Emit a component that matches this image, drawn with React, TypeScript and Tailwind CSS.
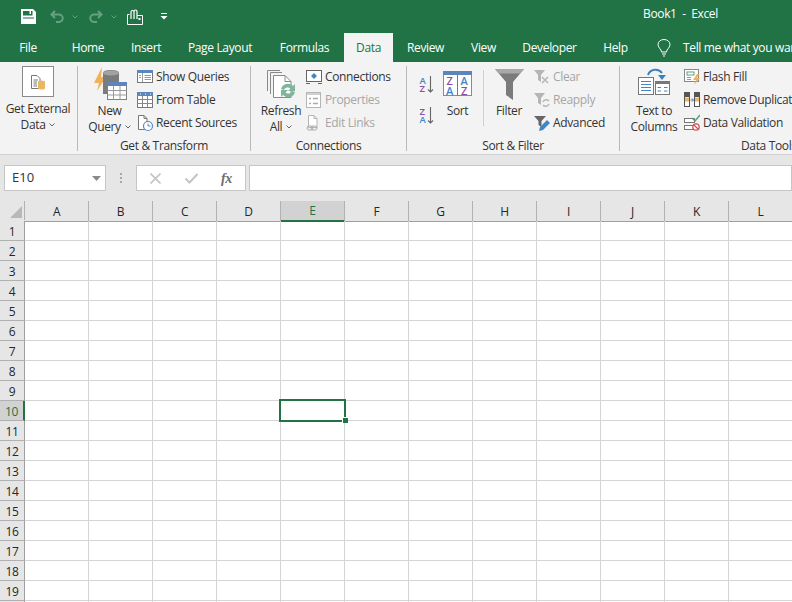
import type { ReactNode } from 'react'

const font = "font-['Open_Sans','Noto_Sans',sans-serif]"
const columns = ['A', 'B', 'C', 'D', 'E', 'F', 'G', 'H', 'I', 'J', 'K', 'L']
const rows = Array.from({ length: 20 }, (_, i) => i + 1)
const tabs = [
  { name: 'File', w: 'w-[56px]' },
  { name: 'Home', w: 'w-[64px]' },
  { name: 'Insert', w: 'w-[52px]' },
  { name: 'Page Layout', w: 'w-[96px]' },
  { name: 'Formulas', w: 'w-[76px] pr-[3px]' },
  { name: 'Data', w: 'w-[49px]', active: true },
  { name: 'Review', w: 'w-[65px]' },
  { name: 'View', w: 'w-[51px]' },
  { name: 'Developer', w: 'w-[81px]' },
  { name: 'Help', w: 'w-[51px]' },
]

function Chevron({ color = '#666' }: { color?: string }) {
  return (
    <svg width="6" height="4" viewBox="0 0 6 4" className="inline-block ml-[4px] mb-[1px]">
      <path d="M0.5 0.5 L3 3 L5.5 0.5" fill="none" stroke={color} strokeWidth="1" />
    </svg>
  )
}

function Small({ icon, label, disabled }: { icon: ReactNode; label: string; disabled?: boolean }) {
  return (
    <div className={`flex items-center h-[23px] whitespace-nowrap ${disabled ? 'text-[#a6a6a6]' : 'text-[#333]'}`}>
      <div className="w-[16px] h-[18px] mr-[3px] shrink-0">{icon}</div>
      {label}
    </div>
  )
}

function Large({ icon, lines, chevron, w, iconH = 'h-[38px]' }: { icon: ReactNode; lines: string[]; chevron?: boolean; w: string; iconH?: string }) {
  return (
    <div className={`flex flex-col items-center shrink-0 text-[#333] ${w}`}>
      <div className={`flex items-end justify-center ${iconH}`}>{icon}</div>
      {lines.map((l, i) => (
        <div key={l} className="h-[16px] leading-[16px] whitespace-nowrap">
          {l}
          {chevron && i === lines.length - 1 && <Chevron />}
        </div>
      ))}
    </div>
  )
}

function Group({ label, w, children, labelClass = 'justify-center' }: { label: string; w: string; children: ReactNode; labelClass?: string }) {
  return (
    <div className={`flex flex-col shrink-0 h-[92px] ${w}`}>
      <div className="flex h-[76px] pt-[3px]">{children}</div>
      <div className={`flex h-[16px] leading-[16px] text-[#333] whitespace-nowrap ${labelClass}`}>{label}</div>
    </div>
  )
}

function Sep() {
  return <div className="w-px h-[85px] mt-[4px] bg-[#b9b9b9] shrink-0" />
}

function Stack({ ml, w, children }: { ml: string; w: string; children: ReactNode }) {
  return <div className={`flex flex-col shrink-0 ${ml} ${w}`}>{children}</div>
}

const Blue = '#5a86bd'

const icons = {
  external: (
    <div className="w-[32px] h-[31px] mb-[4px] border border-[#8a8a8a] bg-white flex items-center justify-center">
      <svg width="16" height="16" viewBox="0 0 16 16">
        <path d="M1.5 1.5 H7 L10 4.5 V14.5 H1.5 Z" fill="#fff" stroke="#777" />
        <path d="M3.5 6 H8 M3.5 8 H7 M3.5 10 H7 M3.5 12 H7" stroke="#777" />
        <path d="M8 8 Q8 6.5 11.5 6.5 Q15 6.5 15 8 V14 Q15 15.5 11.5 15.5 Q8 15.5 8 14 Z" fill="#e9b566" />
      </svg>
    </div>
  ),
  newQuery: (
    <svg width="34" height="33" viewBox="0 0 34 33" className="mb-[3px]">
      <path d="M9 0 L1 16 H6 L4 24 L13 10 H8 Z" fill="#efb15a" />
      <path d="M10 6 Q10 3 18 3 Q26 3 26 6 V27 H10 Z" fill="#7b7b7b" />
      <ellipse cx="18" cy="6" rx="8" ry="2.6" fill="#a2a2a2" />
      <rect x="14.5" y="15.5" width="19" height="17" fill="#fff" stroke="#808080" />
      <rect x="14" y="15" width="20" height="4" fill={Blue} />
      <path d="M14.5 23.5 H33.5 M14.5 28 H33.5 M20.5 19 V32.5 M27 19 V32.5" stroke="#9a9a9a" />
    </svg>
  ),
  showQueries: (
    <svg width="16" height="18" viewBox="0 0 16 18">
      <rect x="0.5" y="2.5" width="15" height="12" fill="#fff" stroke="#777" />
      <rect x="0" y="2" width="16" height="3" fill={Blue} />
      <path d="M5.5 5 V14 M7.5 7.5 H14 M7.5 9.5 H14 M7.5 11.5 H14 M2 7.5 H4 M2 9.5 H4" stroke="#999" />
    </svg>
  ),
  fromTable: (
    <svg width="16" height="18" viewBox="0 0 16 18">
      <rect x="0.5" y="1.5" width="15" height="15" fill="#fff" stroke="#777" />
      <rect x="0" y="1" width="16" height="4" fill={Blue} />
      <path d="M0.5 8.5 H15.5 M0.5 12.5 H15.5 M5.5 5 V16 M10.5 5 V16" stroke="#888" />
      <path d="M3 3 H4 M8 3 H9 M13 3 H14" stroke="#fff" />
    </svg>
  ),
  recent: (
    <svg width="17" height="18" viewBox="0 0 17 18">
      <path d="M1.5 1.5 H7 L10 4.5 V15.5 H1.5 Z" fill="#fff" stroke="#777" />
      <path d="M7 1.5 V4.5 H10" fill="none" stroke="#777" />
      <circle cx="11" cy="12" r="4.5" fill="#fff" stroke={Blue} strokeWidth="1.2" />
      <path d="M11 9.5 V12 H13.5" fill="none" stroke={Blue} />
    </svg>
  ),
  refresh: (
    <svg width="30" height="32" viewBox="0 0 30 32" className="mb-[2px]">
      <path d="M1.5 1.5 H14 M1.5 1.5 V22" fill="none" stroke="#8a8a8a" />
      <path d="M4.5 3.5 H16 M4.5 3.5 V25" fill="none" stroke="#8a8a8a" />
      <path d="M7.5 6.5 H19 L25 12.5 V28.5 H7.5 Z" fill="#fff" stroke="#8a8a8a" />
      <path d="M19 6.5 V12.5 H25" fill="none" stroke="#8a8a8a" />
      <path d="M15 20 A7 7 0 0 1 27 17 L29 15 V22 H22 L24.5 19.5 A4 4 0 0 0 18 21 Z" fill="#7fb59a" />
      <path d="M29 23 A7 7 0 0 1 17 26 L15 28 V21 H22 L19.5 23.5 A4 4 0 0 0 26 22 Z" fill="#7fb59a" />
    </svg>
  ),
  connections: (
    <svg width="16" height="18" viewBox="0 0 16 18">
      <rect x="0.5" y="2.5" width="15" height="11" fill="#fff" stroke="#666" />
      <path d="M8 5 L11 8 L8 11 L5 8 Z" fill="#3f87c8" />
      <path d="M0 15.5 H4 M12 15.5 H16" stroke="#666" />
    </svg>
  ),
  properties: (
    <svg width="16" height="18" viewBox="0 0 16 18">
      <rect x="0.5" y="1.5" width="14" height="15" fill="#fff" stroke="#b5b5b5" />
      <rect x="1" y="2" width="13" height="2" fill="#d0d0d0" />
      <path d="M3 7.5 H5 M3 12.5 H5 M7 7.5 H12 M7 12.5 H12" stroke="#aaa" strokeWidth="1.3" />
    </svg>
  ),
  editLinks: (
    <svg width="16" height="18" viewBox="0 0 16 18">
      <path d="M2.5 1.5 H8 L11 4.5 V13.5 H2.5 Z" fill="#fff" stroke="#b5b5b5" />
      <path d="M8 1.5 V4.5 H11" fill="none" stroke="#b5b5b5" />
      <rect x="1" y="12" width="6" height="4" rx="2" fill="none" stroke="#aaa" />
      <rect x="5" y="12" width="6" height="4" rx="2" fill="none" stroke="#aaa" />
    </svg>
  ),
  sortAZ: (
    <svg width="16" height="20" viewBox="0 0 16 20">
      <text x="1.5" y="9.5" fontSize="9.5" fontWeight="600" fill="#3f87c8">A</text>
      <text x="1.5" y="18" fontSize="9.5" fontWeight="600" fill="#8b4ea6">Z</text>
      <path d="M12.5 2 V18 M10 15.5 L12.5 18 L15 15.5" fill="none" stroke="#666" strokeWidth="1.1" />
    </svg>
  ),
  sortZA: (
    <svg width="16" height="20" viewBox="0 0 16 20">
      <text x="1.5" y="9.5" fontSize="9.5" fontWeight="600" fill="#8b4ea6">Z</text>
      <text x="1.5" y="18" fontSize="9.5" fontWeight="600" fill="#3f87c8">A</text>
      <path d="M12.5 2 V18 M10 15.5 L12.5 18 L15 15.5" fill="none" stroke="#666" strokeWidth="1.1" />
    </svg>
  ),
  sort: (
    <svg width="29" height="25" viewBox="0 0 29 25" className="mb-[7px]">
      <rect x="0.5" y="0.5" width="28" height="24" fill="#fff" stroke="#8a8a8a" />
      <rect x="0" y="0" width="29" height="4" fill={Blue} />
      <path d="M14.5 4 V25" stroke="#777" />
      <text x="3.5" y="14" fontSize="11" fontWeight="600" fill="#8b4ea6">Z</text>
      <text x="3" y="23.5" fontSize="11" fontWeight="600" fill="#3f87c8">A</text>
      <text x="17.5" y="14" fontSize="11" fontWeight="600" fill="#3f87c8">A</text>
      <text x="18" y="23.5" fontSize="11" fontWeight="600" fill="#8b4ea6">Z</text>
    </svg>
  ),
  filter: (
    <svg width="29" height="31" viewBox="0 0 29 31" className="mb-[3px]">
      <path d="M0 0 H29 L18 13 V31 L11 26 V13 Z" fill="#7b7b7b" />
      <path d="M0 0 H29 L25 4.5 H4 Z" fill="#a8a8a8" />
    </svg>
  ),
  clear: (
    <svg width="16" height="18" viewBox="0 0 16 18">
      <path d="M0 2 H11 L7 7 V14 L4 12 V7 Z" fill="#b5b5b5" />
      <path d="M8 9 L14 15 M14 9 L8 15" stroke="#b5b5b5" strokeWidth="1.5" />
    </svg>
  ),
  reapply: (
    <svg width="16" height="18" viewBox="0 0 16 18">
      <path d="M0 2 H11 L7 7 V14 L4 12 V7 Z" fill="#b5b5b5" />
      <path d="M9 11 A3.5 3.5 0 0 1 15 10 M15 13 A3.5 3.5 0 0 1 9 14" fill="none" stroke="#b5b5b5" strokeWidth="1.4" />
    </svg>
  ),
  advanced: (
    <svg width="16" height="18" viewBox="0 0 16 18">
      <path d="M0 2 H12 L7.5 7 V13 L4.5 11 V7 Z" fill="#666" />
      <path d="M5 17 L6 13 L13 6 L16 9 L9 16 Z" fill="#3f87c8" />
    </svg>
  ),
  textColumns: (
    <svg width="32" height="27" viewBox="0 0 32 27" className="mb-[8px]">
      <path d="M10 7 A8 8 0 0 1 24 5" fill="none" stroke="#3f7fc0" strokeWidth="2" />
      <path d="M20 7 H28 L24 12 Z" fill="#3f7fc0" />
      <rect x="0.5" y="9.5" width="15" height="17" fill="#fff" stroke="#777" />
      <path d="M3 13.5 H13 M3 16.5 H13 M3 19.5 H13 M3 22.5 H13" stroke="#3f87c8" />
      <rect x="17.5" y="13.5" width="14" height="13" fill="#fff" stroke="#777" />
      <rect x="17" y="13" width="15" height="3" fill="#777" />
      <path d="M19.5 19.5 H23 M26 19.5 H29.5 M19.5 23 H23 M26 23 H29.5" stroke="#3f87c8" />
    </svg>
  ),
  flashFill: (
    <svg width="16" height="18" viewBox="0 0 16 18">
      <rect x="0.5" y="1.5" width="14" height="12" fill="#fff" stroke="#888" />
      <rect x="3" y="4" width="7" height="3" fill="#fff" stroke="#5fa080" />
      <path d="M3 9.5 H7 M3 11.5 H7" stroke="#999" />
      <path d="M13 6 L9 12 H12 L10 17 L16 10 H13 L15 6 Z" fill="#efb15a" />
    </svg>
  ),
  removeDup: (
    <svg width="16" height="18" viewBox="0 0 16 18">
      <rect x="0.5" y="1.5" width="5" height="14" fill="#fff" stroke="#555" />
      <rect x="10.5" y="1.5" width="5" height="14" fill="#fff" stroke="#555" />
      <rect x="1" y="2" width="4" height="4" fill="#555" />
      <rect x="11" y="2" width="4" height="4" fill="#555" />
      <rect x="1" y="6.5" width="4" height="4" fill="#e9b566" />
      <rect x="11" y="6.5" width="4" height="4" fill="#e9b566" />
      <path d="M6.5 9 H9.5 M8 7.5 L9.5 9 L8 10.5" fill="none" stroke="#3f87c8" />
    </svg>
  ),
  validation: (
    <svg width="16" height="18" viewBox="0 0 16 18">
      <rect x="0.5" y="4.5" width="10" height="4" fill="#fff" stroke="#777" />
      <rect x="0.5" y="11.5" width="10" height="4" fill="#fff" stroke="#777" />
      <path d="M8 4 L11 7 L16 1" fill="none" stroke="#5fa080" strokeWidth="1.5" />
      <circle cx="12" cy="13" r="3.2" fill="#fff" stroke="#d05050" strokeWidth="1.3" />
      <path d="M10 11 L14 15" stroke="#d05050" strokeWidth="1.3" />
    </svg>
  ),
}

function TitleBar() {
  return (
    <div className="flex items-center h-[33px] bg-[#217346] text-white shrink-0">
      <svg width="15" height="15" viewBox="0 0 15 15" className="ml-[21px] shrink-0">
        <path d="M0 0 H12 L15 3 V15 H0 Z" fill="#fff" />
        <rect x="2" y="2" width="9.5" height="4.5" fill="#217346" />
        <rect x="2" y="8.5" width="11" height="1" fill="#217346" />
        <rect x="4" y="10.5" width="7" height="3" fill="#fff" />
        <rect x="8.5" y="2" width="1.5" height="3" fill="#fff" />
      </svg>
      <svg width="15" height="13" viewBox="0 0 15 13" className="ml-[14px] shrink-0">
        <path d="M5 1 L1.5 4.5 L5 8 M2 4.5 H9 A3.5 3.5 0 0 1 9 12 H6" fill="none" stroke="#63a182" strokeWidth="2" />
      </svg>
      <svg width="6" height="4" viewBox="0 0 6 4" className="ml-[7px] shrink-0">
        <path d="M0.5 0.5 L3 3 L5.5 0.5" fill="none" stroke="#63a182" />
      </svg>
      <svg width="15" height="13" viewBox="0 0 15 13" className="ml-[10px] shrink-0">
        <path d="M10 1 L13.5 4.5 L10 8 M13 4.5 H6 A3.5 3.5 0 0 0 6 12 H9" fill="none" stroke="#63a182" strokeWidth="2" />
      </svg>
      <svg width="6" height="4" viewBox="0 0 6 4" className="ml-[8px] shrink-0">
        <path d="M0.5 0.5 L3 3 L5.5 0.5" fill="none" stroke="#63a182" />
      </svg>
      <svg width="16" height="16" viewBox="0 0 16 16" className="ml-[10px] shrink-0">
        <path d="M2.5 5.5 H0.5 V15.5 H15.5 V6.5 H10" fill="none" stroke="#fff" />
        <path d="M4 10 V3 A1.5 1.5 0 0 1 7 3 V10 M7 9 V2.5 A1.5 1.5 0 0 1 10 2.5 V10" fill="none" stroke="#fff" strokeWidth="1.2" />
        <rect x="11.5" y="9" width="2" height="2" fill="#fff" />
      </svg>
      <svg width="8" height="7" viewBox="0 0 8 7" className="ml-[17px] shrink-0">
        <path d="M1 0.5 H7" stroke="#fff" />
        <path d="M0.5 3 H7.5 L4 6.5 Z" fill="#fff" />
      </svg>
      <div className="ml-[475px] whitespace-nowrap pb-[5px]">Book1&nbsp; -&nbsp; Excel</div>
    </div>
  )
}

function TabBar() {
  return (
    <div className="flex items-stretch h-[29px] bg-[#217346] text-white shrink-0 overflow-hidden">
      {tabs.map((t) => (
        <div
          key={t.name}
          className={`flex items-center justify-center shrink-0 ${t.w} ${t.active ? 'bg-[#f3f3f3] text-[#217346]' : ''}`}
        >
          {t.name}
        </div>
      ))}
      <svg width="14" height="18" viewBox="0 0 14 18" className="ml-[16px] mt-[6px] shrink-0">
        <path d="M4.5 13 C4.5 10 1 9 1 5.5 A6 5 0 0 1 13 5.5 C13 9 9.5 10 9.5 13 Z" fill="none" stroke="#fff" />
        <path d="M5 15 H9 M6 17 H8" stroke="#fff" />
      </svg>
      <div className="ml-[12px] flex items-center whitespace-nowrap">Tell me what you want to do</div>
    </div>
  )
}

function Ribbon() {
  return (
    <div className="flex h-[93px] bg-[#f3f3f3] border-b border-[#d2d2d2] shrink-0 overflow-hidden">
      <Group label="" w="w-[77px]">
        <Large w="w-[76px]" iconH="h-[36px]" icon={icons.external} lines={['Get External', 'Data']} chevron />
      </Group>
      <Sep />
      <Group label="Get & Transform" w="w-[172px]">
        <div className="w-[5px] shrink-0" />
        <Large w="w-[53px]" icon={icons.newQuery} lines={['New', 'Query']} chevron />
        <Stack ml="ml-[1px]" w="w-[110px]">
          <Small icon={icons.showQueries} label="Show Queries" />
          <Small icon={icons.fromTable} label="From Table" />
          <Small icon={icons.recent} label="Recent Sources" />
        </Stack>
      </Group>
      <Sep />
      <Group label="Connections" w="w-[155px]">
        <div className="w-[8px] shrink-0" />
        <Large w="w-[44px]" icon={icons.refresh} lines={['Refresh', 'All']} chevron />
        <Stack ml="ml-[3px]" w="w-[95px]">
          <Small icon={icons.connections} label="Connections" />
          <Small icon={icons.properties} label="Properties" disabled />
          <Small icon={icons.editLinks} label="Edit Links" disabled />
        </Stack>
      </Group>
      <Sep />
      <Group label="Sort & Filter" w="w-[212px]">
        <div className="flex flex-col w-[16px] ml-[11px] mt-[9px] gap-[11px] shrink-0">
          {icons.sortAZ}
          {icons.sortZA}
        </div>
        <div className="w-[8px] shrink-0" />
        <Large w="w-[31px]" icon={icons.sort} lines={['Sort']} />
        <div className="ml-[10px] mr-[8px] w-px h-[56px] mt-[5px] bg-[#d0d0d0] shrink-0" />
        <Large w="w-[34px]" icon={icons.filter} lines={['Filter']} />
        <Stack ml="ml-[8px]" w="w-[85px]">
          <Small icon={icons.clear} label="Clear" disabled />
          <Small icon={icons.reapply} label="Reapply" disabled />
          <Small icon={icons.advanced} label="Advanced" />
        </Stack>
      </Group>
      <Sep />
      <Group label="Data Tools" w="w-[260px]" labelClass="pl-[121px]">
        <Large w="w-[68px]" icon={icons.textColumns} lines={['Text to', 'Columns']} />
        <Stack ml="ml-[-4px]" w="w-[160px]">
          <Small icon={icons.flashFill} label="Flash Fill" />
          <Small icon={icons.removeDup} label="Remove Duplicates" />
          <Small icon={icons.validation} label="Data Validation" />
        </Stack>
      </Group>
    </div>
  )
}

function FormulaBar() {
  return (
    <div className="flex items-start h-[46px] pt-[10px] bg-[#e6e6e6] shrink-0">
      <div className="flex items-center justify-between ml-[4px] w-[102px] h-[26px] bg-white border border-[#c6c6c6] pl-[7px] pr-[4px] text-[#333] text-[13px] tracking-normal">
        E10
        <svg width="9" height="5" viewBox="0 0 9 5">
          <path d="M0 0 H9 L4.5 5 Z" fill="#8a8a8a" />
        </svg>
      </div>
      <div className="flex flex-col gap-[2px] w-[2px] ml-[14px] mr-[14px] mt-[8px]">
        <div className="h-[2px] bg-[#a8a8a8]" />
        <div className="h-[2px] bg-[#a8a8a8]" />
        <div className="h-[2px] bg-[#a8a8a8]" />
      </div>
      <div className="flex items-center w-[110px] h-[26px] bg-white border border-[#c6c6c6] shrink-0">
        <svg width="11" height="11" viewBox="0 0 11 11" className="ml-[13px]">
          <path d="M0.5 0.5 L10.5 10.5 M10.5 0.5 L0.5 10.5" stroke="#c4c4c4" strokeWidth="1.6" />
        </svg>
        <svg width="13" height="11" viewBox="0 0 13 11" className="ml-[24px]">
          <path d="M0.5 5.5 L4.5 9.5 L12.5 1" fill="none" stroke="#c4c4c4" strokeWidth="2" />
        </svg>
        <span className="ml-[23px] font-['Liberation_Serif',serif] italic font-bold text-[#6e6e6e] text-[14px]">fx</span>
      </div>
      <div className="ml-[3px] flex-1 h-[26px] bg-white border border-[#c6c6c6]" />
    </div>
  )
}

function Sheet() {
  return (
    <div className="flex flex-col flex-1 bg-white text-[#262626] overflow-hidden">
      <div className="flex h-[20px] shrink-0 bg-[#e6e6e6] border-b border-[#9f9f9f] box-content -mb-px">
        <div className="flex items-end justify-end w-[25px] h-[19px] shrink-0 border-r border-[#b1b1b1] pr-[2px] pb-[2px]">
          <svg width="12" height="12" viewBox="0 0 12 12">
            <path d="M12 0 V12 H0 Z" fill="#b8b8b8" />
          </svg>
        </div>
        {columns.map((c) => (
          <div
            key={c}
            className={`flex items-center justify-center w-[64px] shrink-0 border-r border-[#b1b1b1] ${
              c === 'E' ? 'bg-[#d2d2d2] text-[#217346] border-b-2 border-b-[#217346] h-[21px] pt-[1px]' : 'h-[20px] pt-[1px]'
            }`}
          >
            {c}
          </div>
        ))}
      </div>
      {rows.map((r) => (
        <div key={r} className="flex h-[20px] shrink-0">
          <div
            className={`flex items-center justify-center w-[25px] shrink-0 pt-[2px] border-r border-b border-b-[#b1b1b1] ${
              r === 10
                ? 'bg-[#d2d2d2] text-[#217346] border-r-2 border-r-[#217346]'
                : 'bg-[#e6e6e6] border-r-[#9f9f9f]'
            }`}
          >
            {r}
          </div>
          {columns.map((c) => (
            <div key={c} className="relative w-[64px] shrink-0 border-r border-b border-[#d4d4d4]">
              {r === 10 && c === 'E' && (
                <div className="absolute z-10 left-[-2px] top-[-2px] w-[67px] h-[23px] border-2 border-[#217346]">
                  <div className="absolute right-[-4px] bottom-[-3px] w-[5px] h-[5px] bg-[#217346] border-l border-t border-white box-content" />
                </div>
              )}
            </div>
          ))}
        </div>
      ))}
    </div>
  )
}

export default function App() {
  return (
    <div className={`flex flex-col w-[792px] h-[602px] overflow-hidden text-[12px] tracking-[-0.35px] ${font}`}>
      <TitleBar />
      <TabBar />
      <Ribbon />
      <FormulaBar />
      <Sheet />
    </div>
  )
}
